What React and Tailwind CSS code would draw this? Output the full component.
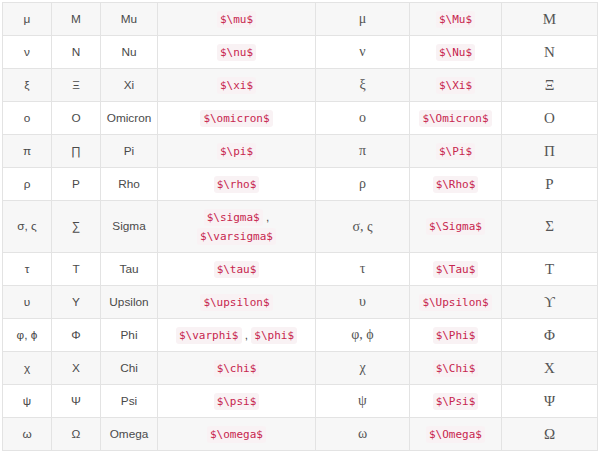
import React from "react";

const rows = [
  ["μ", "Μ", "Mu", ["$\\mu$"], "μ", "$\\Mu$", "Μ"],
  ["ν", "Ν", "Nu", ["$\\nu$"], "ν", "$\\Nu$", "Ν"],
  ["ξ", "Ξ", "Xi", ["$\\xi$"], "ξ", "$\\Xi$", "Ξ"],
  ["ο", "Ο", "Omicron", ["$\\omicron$"], "ο", "$\\Omicron$", "Ο"],
  ["π", "∏", "Pi", ["$\\pi$"], "π", "$\\Pi$", "Π"],
  ["ρ", "Ρ", "Rho", ["$\\rho$"], "ρ", "$\\Rho$", "Ρ"],
  ["σ, ς", "∑", "Sigma", ["$\\sigma$", "$\\varsigma$"], "σ, ς", "$\\Sigma$", "Σ", true],
  ["τ", "Τ", "Tau", ["$\\tau$"], "τ", "$\\Tau$", "Τ"],
  ["υ", "Υ", "Upsilon", ["$\\upsilon$"], "υ", "$\\Upsilon$", "ϒ"],
  ["φ, ϕ", "Φ", "Phi", ["$\\varphi$", "$\\phi$"], "φ, ϕ", "$\\Phi$", "Φ"],
  ["χ", "Χ", "Chi", ["$\\chi$"], "χ", "$\\Chi$", "Χ"],
  ["ψ", "Ψ", "Psi", ["$\\psi$"], "ψ", "$\\Psi$", "Ψ"],
  ["ω", "Ω", "Omega", ["$\\omega$"], "ω", "$\\Omega$", "Ω"],
];

function Code({ children }) {
  return (
    <code className="rounded-[3px] bg-[#f9f2f4] px-[3px] py-[2px] font-['DejaVu_Sans_Mono','Liberation_Mono',monospace] text-[11px] leading-none text-[#c7254e]">
      {children}
    </code>
  );
}

const td =
  "border border-[#e3e3e3] p-0 text-center align-middle leading-[19px]";
const sans = "font-['Liberation_Sans',Arial,sans-serif] text-[11.8px] text-[#4a4a4a]";
const serif = "font-['Liberation_Serif','DejaVu_Serif',serif] text-[14px] leading-none text-[#555]";

export default function App() {
  return (
    <div className="bg-white pl-[2px] pt-[2px]">
      <table className="w-[595px] table-fixed border-collapse">
        <colgroup>
          <col className="w-[49px]" />
          <col className="w-[49px]" />
          <col className="w-[57px]" />
          <col className="w-[158px]" />
          <col className="w-[94px]" />
          <col className="w-[92px]" />
          <col className="w-[96px]" />
        </colgroup>
        <tbody>
          {rows.map((r, i) => {
            const h = r[7] ? "h-[52px]" : "h-[33px]";
            return (
              <tr key={i} className={`${h} ${i % 2 === 0 ? "bg-[#f7f7f7]" : "bg-white"}`}>
                <td className={`${td} ${sans}`}>{r[0]}</td>
                <td className={`${td} ${sans}`}>{r[1]}</td>
                <td className={`${td} ${sans}`}>{r[2]}</td>
                <td className={`${td} ${sans}`}>
                  {r[3].length === 1 ? (
                    <Code>{r[3][0]}</Code>
                  ) : r[7] ? (
                    <>
                      <Code>{r[3][0]}</Code> ,<br />
                      <Code>{r[3][1]}</Code>
                    </>
                  ) : (
                    <>
                      <Code>{r[3][0]}</Code> , <Code>{r[3][1]}</Code>
                    </>
                  )}
                </td>
                <td className={`${td} ${serif}`}>{r[4]}</td>
                <td className={`${td} ${sans}`}>
                  <Code>{r[5]}</Code>
                </td>
                <td className={`${td} ${serif} text-[15px]`}>{r[6]}</td>
              </tr>
            );
          })}
        </tbody>
      </table>
    </div>
  );
}
